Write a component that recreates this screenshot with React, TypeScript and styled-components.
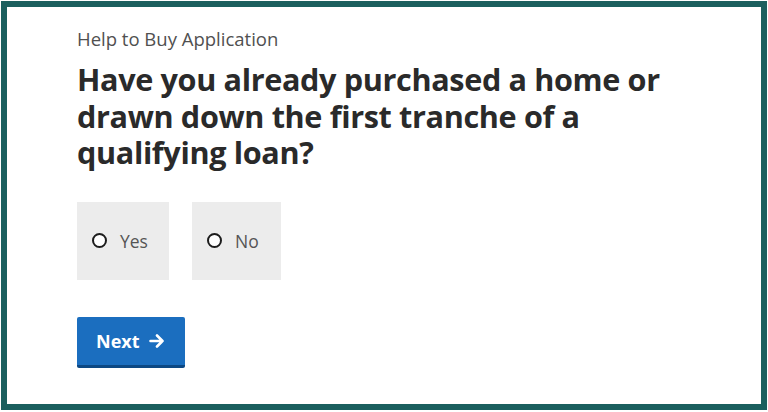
import React from "react";
import styled, { createGlobalStyle } from "styled-components";

const GlobalStyle = createGlobalStyle`
  html, body {
    margin: 0;
    padding: 0;
    background: #ffffff;
  }
  body {
    font-family: "Open Sans", "Noto Sans", sans-serif;
  }
`;

const Frame = styled.div`
  box-sizing: border-box;
  margin: 1px 1px 0 1px;
  width: 766px;
  height: 409px;
  border: 6px solid #1b5f5e;
  padding: 20px 0 0 70px;
`;

const Caption = styled.div`
  font-size: 18.5px;
  line-height: 24px;
  color: #505050;
`;

const Heading = styled.h1`
  margin: 10px 0 0 0;
  width: 630px;
  font-size: 30.6px;
  line-height: 36.5px;
  font-weight: 700;
  color: #2a2a2a;
  letter-spacing: -0.35px;
`;

const Options = styled.div`
  display: flex;
  gap: 23px;
  margin-top: 31px;
`;

const Tile = styled.label<{ $w: number }>`
  box-sizing: border-box;
  width: ${(p) => p.$w}px;
  height: 78px;
  background: #ececec;
  display: flex;
  align-items: center;
  gap: 13px;
  padding-left: 15px;
  cursor: pointer;
`;

const Radio = styled.span`
  box-sizing: border-box;
  width: 15px;
  height: 15px;
  border-radius: 50%;
  border: 2.6px solid #1d1d1d;
  background: #ffffff;
`;

const OptionText = styled.span`
  font-size: 17.5px;
  color: #555555;
`;

const NextButton = styled.button`
  margin-top: 37px;
  box-sizing: border-box;
  width: 108px;
  height: 51px;
  border: none;
  border-bottom: 3px solid #0c4883;
  border-radius: 2px;
  background: #1b6ebf;
  color: #ffffff;
  font-family: "Open Sans", "Noto Sans", sans-serif;
  font-size: 18px;
  font-weight: 700;
  display: flex;
  align-items: center;
  gap: 9px;
  padding: 0 0 0 19px;
  cursor: pointer;
`;

function Arrow() {
  return (
    <svg width="16" height="14" viewBox="0 0 16 14" fill="none">
      <path
        d="M1.5 7h12M8 1.5 13.5 7 8 12.5"
        stroke="#ffffff"
        strokeWidth="2.6"
        strokeLinecap="round"
        strokeLinejoin="round"
      />
    </svg>
  );
}

export default function App() {
  return (
    <>
      <GlobalStyle />
      <Frame>
        <Caption>Help to Buy Application</Caption>
        <Heading>
          Have you already purchased a home or drawn down the first tranche of a
          qualifying loan?
        </Heading>
        <Options>
          <Tile $w={92}>
            <Radio />
            <OptionText>Yes</OptionText>
          </Tile>
          <Tile $w={89}>
            <Radio />
            <OptionText>No</OptionText>
          </Tile>
        </Options>
        <NextButton>
          Next <Arrow />
        </NextButton>
      </Frame>
    </>
  );
}
